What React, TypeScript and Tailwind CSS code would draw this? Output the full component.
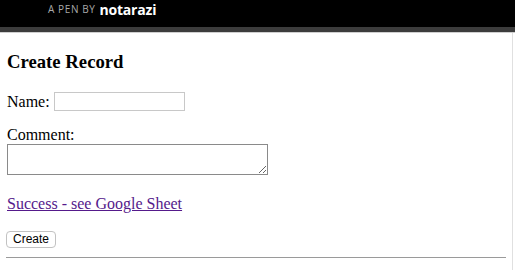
export default function App() {
  return (
    <div className="w-[515px] h-[270px] overflow-hidden bg-white flex flex-col">
      <header className="h-[27px] bg-black flex items-center pl-[48px] shrink-0">
        <span className="text-[10px] tracking-[0.6px] text-[#a8a8a8] font-['Open_Sans',sans-serif] mt-[-8px]">
          A PEN BY
        </span>
        <span className="ml-[4px] text-[14px] font-bold text-white font-['Open_Sans',sans-serif] tracking-[-0.2px] mt-[-9px]">
          notarazi
        </span>
      </header>
      <div className="h-[5px] bg-[#3c3c3c] shrink-0" />
      <div className="h-[1px] bg-[#cfcfcf] shrink-0" />
      <div className="flex flex-1">
        <main className="flex-1 pl-[7px] pr-[6px] font-['Liberation_Serif',serif] text-[16px] text-black leading-[18px]">
          <h3 className="mt-[18px] text-[18.72px] font-bold leading-[22px]">Create Record</h3>
          <form className="mt-[19px]">
            <div className="flex items-center h-[19px]">
              <span>Name:</span>
              <input
                type="text"
                className="ml-[4px] w-[131px] h-[19px] border border-[#c8c8c8] bg-white outline-none"
              />
            </div>
            <div className="mt-[15px]">Comment:</div>
            <textarea className="block mt-[0px] w-[261px] h-[31px] border border-[#8a8a8a] bg-white outline-none resize" />
            <div className="mt-[20px]">
              <a href="#" className="text-[#551a8b] underline">
                Success - see Google Sheet
              </a>
            </div>
            <button
              type="button"
              className="mt-[18px] ml-[-1px] w-[50px] h-[17px] border border-[#c2c2c2] rounded-[4px] bg-white text-[12px] leading-[15px] font-['Liberation_Sans',sans-serif] text-black"
            >
              Create
            </button>
          </form>
          <hr className="mt-[9px] ml-[-1px] w-[500px] border-t border-[#9a9a9a]" />
        </main>
        <div className="w-[3px] border-l border-[#e0e0e0] bg-white" />
      </div>
    </div>
  )
}
